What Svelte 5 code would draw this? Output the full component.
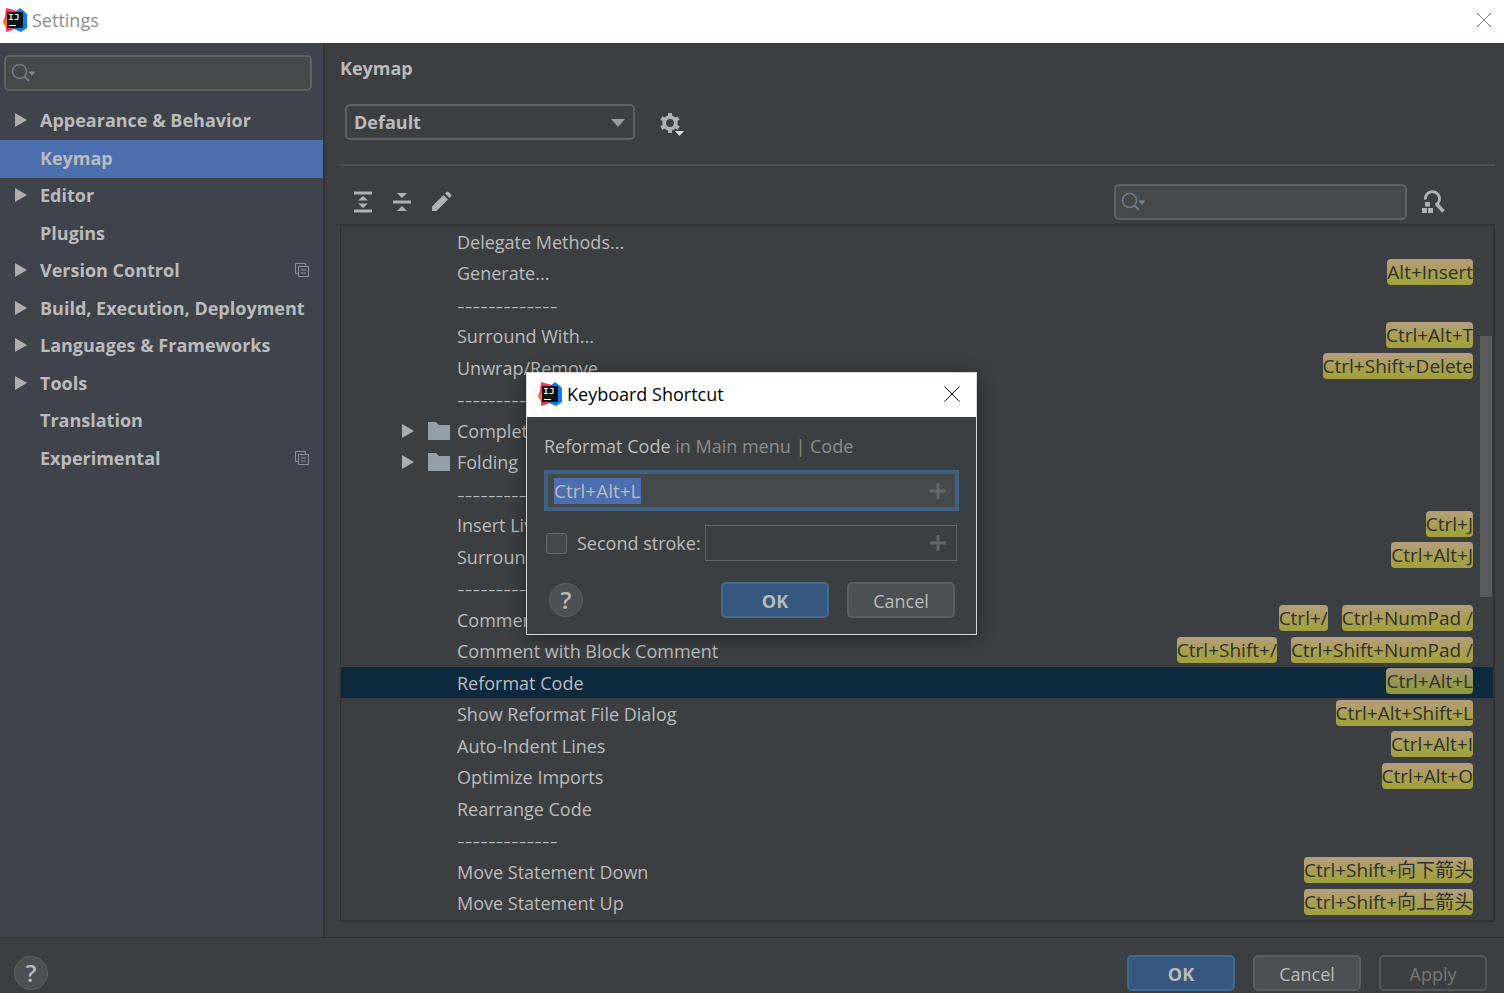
<script lang="ts">
	import { onMount } from 'svelte';

	type Section = { name: string; children?: boolean; project?: boolean };
	type Action = { name: string; keys?: string[]; folder?: boolean };

	const sections: Section[] = [
		{ name: 'Appearance & Behavior', children: true },
		{ name: 'Keymap' },
		{ name: 'Editor', children: true },
		{ name: 'Plugins' },
		{ name: 'Version Control', children: true, project: true },
		{ name: 'Build, Execution, Deployment', children: true },
		{ name: 'Languages & Frameworks', children: true },
		{ name: 'Tools', children: true },
		{ name: 'Translation' },
		{ name: 'Experimental', project: true }
	];

	const separator = '-------------';

	const actions: Action[] = [
		{ name: 'Delegate Methods...' },
		{ name: 'Generate...', keys: ['Alt+Insert'] },
		{ name: separator },
		{ name: 'Surround With...', keys: ['Ctrl+Alt+T'] },
		{ name: 'Unwrap/Remove...', keys: ['Ctrl+Shift+Delete'] },
		{ name: separator },
		{ name: 'Completion', folder: true },
		{ name: 'Folding', folder: true },
		{ name: separator },
		{ name: 'Insert Live Template...', keys: ['Ctrl+J'] },
		{ name: 'Surround with Live Template...', keys: ['Ctrl+Alt+J'] },
		{ name: separator },
		{ name: 'Comment with Line Comment', keys: ['Ctrl+/', 'Ctrl+NumPad /'] },
		{ name: 'Comment with Block Comment', keys: ['Ctrl+Shift+/', 'Ctrl+Shift+NumPad /'] },
		{ name: 'Reformat Code', keys: ['Ctrl+Alt+L'] },
		{ name: 'Show Reformat File Dialog', keys: ['Ctrl+Alt+Shift+L'] },
		{ name: 'Auto-Indent Lines', keys: ['Ctrl+Alt+I'] },
		{ name: 'Optimize Imports', keys: ['Ctrl+Alt+O'] },
		{ name: 'Rearrange Code' },
		{ name: separator },
		{ name: 'Move Statement Down', keys: ['Ctrl+Shift+向下箭头'] },
		{ name: 'Move Statement Up', keys: ['Ctrl+Shift+向上箭头'] }
	];

	let section = $state('Keymap');
	let action = $state('Reformat Code');
	let firstStroke = $state('Ctrl+Alt+L');
	let secondStroke = $state('');
	let useSecond = $state(false);
	let dialogOpen = $state(true);
	let strokeInput: HTMLInputElement;

	onMount(() => {
		strokeInput.focus();
		strokeInput.select();
	});
</script>

{#snippet logo()}
	<svg class="logo" width="24" height="24" viewBox="0 0 24 24" aria-hidden="true">
		<path d="M3 0 L14 3 L12 12 L3 19 L0 14 L2 9 Z" fill="#fe315d" />
		<path d="M0 14 L5 9 L5 19 L2 18 Z" fill="#f97a12" />
		<path d="M3 18 L14 19 L12 21 L3 24 Z" fill="#fe315d" />
		<path d="M12 4 L17 0 L22 4 L24 6 L24 20 L18 24 L11 21 Z" fill="#087cfa" />
		<rect x="4" y="4" width="16" height="16" fill="#111" />
		<path d="M6 6.500h4M8 6.500v5M6 11.500h4M12 6.500h3v4q0 1-1 1H11.500" fill="none" stroke="#fff" stroke-width="1.200" />
		<path d="M6 17.500h7" stroke="#fff" />
	</svg>
{/snippet}

{#snippet magnifier()}
	<svg class="magnifier" width="26" height="20" viewBox="0 0 26 20" aria-hidden="true">
		<circle cx="8.500" cy="8.500" r="7" fill="none" stroke="#6e7d87" stroke-width="1.500" />
		<path d="M13.500 13.500 L18 18" stroke="#6e7d87" stroke-width="2" />
		<path d="M17.500 8.500h7l-3.500 4z" fill="#7f8b91" />
	</svg>
{/snippet}

{#snippet plus()}
	<svg class="plus" width="16" height="16" viewBox="0 0 16 16" aria-hidden="true">
		<path d="M0 8h16M8 0v16" stroke="#62676a" stroke-width="3" />
	</svg>
{/snippet}

{#snippet arrow()}
	<svg width="12" height="14" viewBox="0 0 12 14" aria-hidden="true">
		<path d="M0 0 L12 7 L0 14 Z" fill="#adadad" />
	</svg>
{/snippet}

<div class="window">
	<header class="titlebar">
		{@render logo()}
		<span>Settings</span>
		<button class="close" aria-label="Close">
			<svg width="16" height="16" viewBox="0 0 16 16"><path d="M1 1 L15 15 M15 1 L1 15" stroke="#888" /></svg>
		</button>
	</header>

	<div class="content">
		<aside>
			<div class="search">
				{@render magnifier()}
				<input type="text" aria-label="Search settings" />
			</div>
			<ul class="sections">
				{#each sections as item}
					<li>
						<button class:selected={section === item.name} onclick={() => (section = item.name)}>
							<span class="arrow">{#if item.children}{@render arrow()}{/if}</span>
							<span class="name">{item.name}</span>
							{#if item.project}
								<svg width="14" height="14" viewBox="0 0 14 14" aria-hidden="true">
									<path d="M3 10.500H.5V.5h10V3" fill="none" stroke="#87939a" />
									<path d="M3.500 3.500h10v10h-10zM6 7h5M6 10h5" fill="none" stroke="#87939a" />
								</svg>
							{/if}
						</button>
					</li>
				{/each}
			</ul>
		</aside>

		<main>
			<h1>Keymap</h1>
			<div class="scheme">
				<div class="combo">
					<select aria-label="Keymap scheme">
						<option>Default</option>
					</select>
					<svg width="14" height="8" viewBox="0 0 14 8" aria-hidden="true"><path d="M0 0h14L7 8z" fill="#9a9da0" /></svg>
				</div>
				<button class="icon" aria-label="Scheme actions">
					<svg width="26" height="28" viewBox="-1 -5 26 28">
						<g fill="#afb1b3">
							<path d="M8 0h4v5h-4z M8 15h4v5h-4z" />
							<path d="M8 0h4v5h-4z M8 15h4v5h-4z" transform="rotate(60 10 10)" />
							<path d="M8 0h4v5h-4z M8 15h4v5h-4z" transform="rotate(120 10 10)" />
						</g>
						<circle cx="10" cy="10" r="5.800" fill="none" stroke="#afb1b3" stroke-width="3.800" />
						<path d="M15 18h9l-4.500 5z" fill="#d8d8d8" />
					</svg>
				</button>
			</div>
			<hr />

			<div class="toolbar">
				<button class="icon" aria-label="Expand All">
					<svg width="24" height="24" viewBox="0 0 24 24">
						<path d="M3 1.500h18v3H3zM3 19.500h18v3H3zM7 10.500l5-4.500 5 4.500zM7 13.500h10l-5 4.500z" fill="#afb1b3" />
					</svg>
				</button>
				<button class="icon" aria-label="Collapse All">
					<svg width="24" height="24" viewBox="0 0 24 24">
						<path d="M3 10.500h18v3H3zM7 3h10l-5 5zM7 21l5-5 5 5z" fill="#afb1b3" />
					</svg>
				</button>
				<button class="icon" aria-label="Edit Shortcut">
					<svg width="24" height="24" viewBox="0 0 24 24">
						<path d="M3 16.500 L14.500 5 L19 9.500 L7.500 21 H3z M16 3.500 L17.500 2 Q18.500 1 19.500 2 L22 4.500 Q23 5.500 22 6.500 L20.500 8z" fill="#afb1b3" />
					</svg>
				</button>
				<div class="search">
					{@render magnifier()}
					<input type="text" aria-label="Search actions" />
				</div>
				<button class="icon" aria-label="Find Actions by Shortcut">
					<svg width="24" height="24" viewBox="0 0 24 24">
						<path d="M3.500 9.500 A7 7 0 1 1 13.500 15" fill="none" stroke="#afb1b3" stroke-width="3" />
						<path d="M15 14.500 L21.500 21.500" stroke="#afb1b3" stroke-width="3.500" />
						<path d="M3 12h5v4.500H3zM0 18h5v5H0zM6 18h5v5H6z" fill="#afb1b3" />
					</svg>
				</button>
			</div>

			<div class="tree">
				<ul>
					{#each actions as item}
						<li class:selected={action === item.name}>
							<span class="branch">
								{#if item.folder}
									{@render arrow()}
									<svg width="22" height="18" viewBox="0 0 22 18" aria-hidden="true">
										<path d="M0 0h8l3 3h11v15H0z" fill="#94a0a9" />
									</svg>
								{/if}
							</span>
							<span class="name" class:separator={item.name === separator}>{item.name}</span>
							{#each item.keys ?? [] as key}
								<kbd>{key}</kbd>
							{/each}
						</li>
					{/each}
				</ul>
				<div class="thumb"></div>
			</div>
		</main>
	</div>

	<footer>
		<button class="help" aria-label="Help">?</button>
		<button class="btn primary">OK</button>
		<button class="btn">Cancel</button>
		<button class="btn" disabled>Apply</button>
	</footer>

	{#if dialogOpen}
		<div class="overlay">
			<div class="dialog" role="dialog" aria-label="Keyboard Shortcut">
				<header>
					{@render logo()}
					<span>Keyboard Shortcut</span>
					<button class="close" aria-label="Close" onclick={() => (dialogOpen = false)}>
						<svg width="16" height="16" viewBox="0 0 16 16"><path d="M.5.5 L15.500 15.500 M15.500.5 L.5 15.500" stroke="#000" /></svg>
					</button>
				</header>
				<div class="body">
					<p>Reformat Code <span>in Main menu | Code</span></p>
					<div class="stroke focused">
						<input type="text" aria-label="First stroke" bind:this={strokeInput} bind:value={firstStroke} />
						{@render plus()}
					</div>
					<div class="second">
						<input type="checkbox" id="second" bind:checked={useSecond} />
						<label for="second">Second stroke:</label>
						<div class="stroke">
							<input type="text" aria-label="Second stroke" disabled={!useSecond} bind:value={secondStroke} />
							{@render plus()}
						</div>
					</div>
					<div class="buttons">
						<button class="help" aria-label="Help">?</button>
						<button class="btn primary" onclick={() => (dialogOpen = false)}>OK</button>
						<button class="btn" onclick={() => (dialogOpen = false)}>Cancel</button>
					</div>
				</div>
			</div>
		</div>
	{/if}
</div>

<style>
	:global(body) {
		background: #3c3f41;
	}
	.window {
		position: relative;
		display: flex;
		flex-direction: column;
		min-height: 100vh;
		background: #3c3f41;
		color: #bbbbbb;
		font-family: 'Open Sans', 'Noto Sans CJK SC', sans-serif;
		font-size: 18px;
		line-height: 26px;
	}
	.window * {
		box-sizing: border-box;
	}
	button,
	input,
	select {
		margin: 0;
		padding: 0;
		border: none;
		outline: none;
		background: none;
		color: inherit;
		font: inherit;
	}
	svg {
		display: block;
		flex: none;
	}
	ul {
		margin: 0;
		padding: 0;
		list-style: none;
	}

	.titlebar {
		display: flex;
		align-items: center;
		gap: 5px;
		height: 43px;
		padding: 0 12px 3px 3px;
		background: #fff;
		color: #8c8c8c;
	}
	.close {
		margin-left: auto;
	}

	.content {
		display: flex;
		flex: 1;
	}
	aside {
		width: 325px;
		flex: none;
		padding-top: 12px;
		border-right: 2px solid #333435;
		background: #3f434c;
	}
	.search {
		display: flex;
		align-items: center;
		height: 36px;
		padding: 0 5px;
		border: 2px solid #5f6162;
		border-radius: 5px;
		background: #45494a;
	}
	.search input {
		flex: 1;
		min-width: 0;
	}
	aside .search {
		margin: 0 11px 11px 4px;
	}
	.sections li {
		height: 38px;
	}
	.sections li:nth-child(odd) {
		height: 37px;
	}
	.sections li:first-child {
		height: 38px;
	}
	.sections button {
		display: flex;
		align-items: center;
		width: 100%;
		height: 100%;
		padding: 0 14px 3px 15px;
		font-weight: 700;
		text-align: left;
	}
	.sections button.selected {
		background: #4b6eaf;
	}
	.sections .arrow {
		width: 25px;
	}
	.name {
		flex: 1;
		white-space: nowrap;
	}

	main {
		flex: 1;
		min-width: 0;
		padding: 12px 9px 15px 15px;
	}
	h1 {
		margin: 0;
		font-size: 18px;
		line-height: 26px;
	}
	.scheme {
		display: flex;
		align-items: center;
		gap: 24px;
		margin-top: 23px;
		padding-left: 5px;
	}
	.combo {
		position: relative;
		width: 290px;
	}
	.combo select {
		width: 100%;
		height: 36px;
		padding-left: 7px;
		border: 2px solid #5f6162;
		border-radius: 5px;
		appearance: none;
		font-weight: 700;
	}
	.combo svg {
		position: absolute;
		top: 15px;
		right: 10px;
		pointer-events: none;
	}
	hr {
		margin: 24px 0 18px;
		border: none;
		border-top: 2px solid #505152;
	}
	.toolbar {
		display: flex;
		align-items: center;
		gap: 15px;
		padding: 0 49px 0 11px;
	}
	.toolbar .search {
		width: 293px;
		margin-left: auto;
	}
	.tree {
		position: relative;
		margin-top: 4px;
		padding-bottom: 1px;
		border: 2px solid #323232;
		border-left-width: 1px;
	}
	.tree li {
		display: flex;
		align-items: center;
		gap: 14px;
		height: 32px;
		padding-right: 20px;
	}
	.tree li:nth-child(odd) {
		height: 31px;
	}
	.tree li.selected {
		background: #0d293e;
	}
	.branch {
		display: flex;
		align-items: center;
		gap: 14px;
		width: 116px;
		margin-right: -14px;
		padding-left: 61px;
	}
	.separator {
		font-size: 24px;
		font-weight: 300;
	}
	kbd {
		height: 26px;
		margin-bottom: 3px;
		border-radius: 4px;
		background: linear-gradient(#b69d80, #a7a04c 60%, #a2a03c);
		color: #303030;
		font-family: inherit;
		font-size: 19px;
		line-height: 26px;
		white-space: nowrap;
	}
	.selected kbd {
		background: linear-gradient(#a8977d, #96984a 60%, #91983e);
	}
	.thumb {
		position: absolute;
		top: 110px;
		right: 1px;
		width: 12px;
		height: 261px;
		background: #595a5b;
	}

	footer {
		display: flex;
		align-items: center;
		gap: 18px;
		height: 56px;
		padding: 16px 17px 1px 14px;
		border-top: 1px solid #323232;
	}
	.help {
		width: 34px;
		height: 34px;
		margin-right: auto;
		border: 1px solid #5e6060;
		border-radius: 50%;
		background: #4c5052;
		font-size: 24px;
		font-weight: 600;
		line-height: 32px;
	}
	.btn {
		width: 108px;
		height: 36px;
		padding-top: 2px;
		border: 2px solid #5a5d5e;
		border-radius: 5px;
		background: #4c5052;
	}
	.btn.primary {
		border-color: #43698d;
		background: #365880;
		font-weight: 700;
	}
	.btn:disabled {
		border-color: #55585a;
		background: none;
		color: #777777;
	}

	.overlay {
		position: absolute;
		inset: 0;
		display: flex;
		align-items: flex-start;
		justify-content: center;
		padding: 372px 1px 0 0;
	}
	.dialog {
		width: 451px;
		border: 1px solid #d8d8d8;
		background: #3c3f41;
		box-shadow: 0 3px 16px rgba(0, 0, 0, 0.4);
	}
	.dialog header {
		display: flex;
		align-items: center;
		gap: 5px;
		height: 44px;
		padding: 0 16px 2px 11px;
		background: #fff;
		color: #000;
	}
	.body {
		padding: 16px 17px;
	}
	.body p {
		margin: 0 0 11px;
	}
	.body p span {
		color: #8c8c8c;
	}
	.stroke {
		display: flex;
		align-items: center;
		flex: 1;
		min-width: 0;
		height: 36px;
		padding: 0 10px 0 8px;
		border: 1px solid #646464;
	}
	.stroke input {
		flex: 1;
		min-width: 0;
		font-size: 19px;
	}
	.stroke input::selection {
		background: #4b6eaf;
		color: #bbbbbb;
	}
	.stroke.focused {
		height: 41px;
		padding: 0 9px 0 6px;
		border: 4px solid #3d6185;
		background: #45494a;
	}
	.second {
		display: flex;
		align-items: center;
		margin: 14px 2px 21px;
	}
	.second input[type='checkbox'] {
		flex: none;
		width: 21px;
		height: 21px;
		margin-right: 10px;
		border: 1px solid #6b6b6b;
		border-radius: 3px;
		background: #43494a;
		appearance: none;
	}
	.second input[type='checkbox']:checked {
		background: #4b6eaf;
	}
	.second label {
		flex: none;
		width: 128px;
	}
	.buttons {
		display: flex;
		align-items: center;
		gap: 18px;
		padding: 0 4px 0 5px;
	}
</style>
